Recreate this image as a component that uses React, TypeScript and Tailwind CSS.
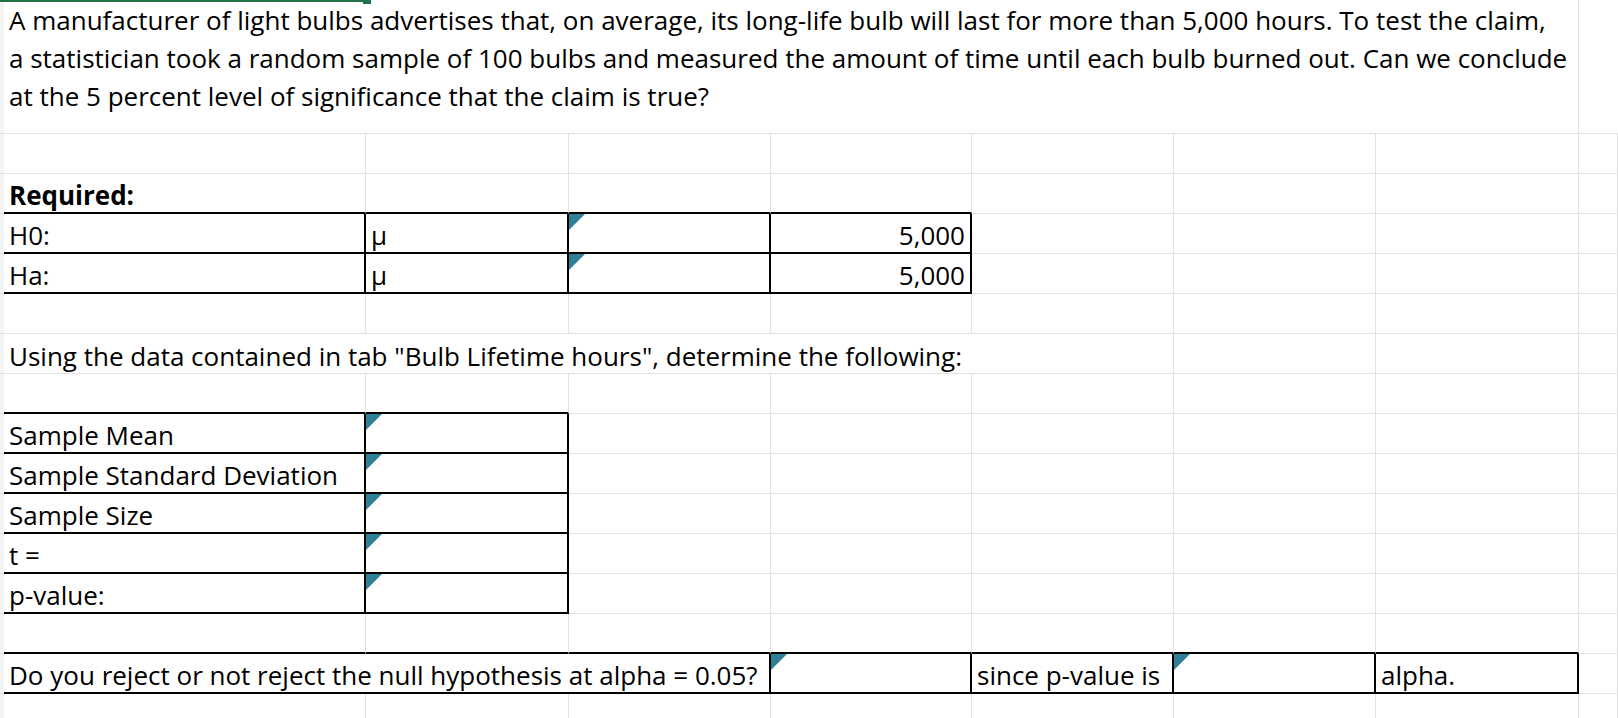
import React from "react";

type Cell = {
  w: string; // width class
  text?: string;
  bold?: boolean;
  alignRight?: boolean;
  bb?: boolean;
  br?: boolean;
  tri?: boolean;
};

const A = "w-[362px]";
const B = "w-[203px]";
const C = "w-[202px]";
const D = "w-[201px]";
const E = "w-[202px]";
const F = "w-[202px]";
const G = "w-[203px]";
const H = "flex-1";

const Tri = () => (
  <svg className="absolute left-0 top-0" width="16" height="16" viewBox="0 0 16 16">
    <polygon points="0,0 16,0 0,16" fill="#2f7f96" />
  </svg>
);

function CellView({ c }: { c: Cell }) {
  const cls = [
    "relative h-full flex items-end shrink-0 overflow-visible whitespace-nowrap pb-[4px] leading-[26px]",
    c.w,
    c.bb ? "border-b-2 border-b-black" : "border-b border-b-[#e1e1e1]",
    c.br ? "border-r-2 border-r-black" : "border-r border-r-[#e1e1e1]",
    c.alignRight ? "justify-end pr-[5px]" : "pl-[5px]",
    c.bold ? "font-bold" : "",
  ].join(" ");
  return (
    <div className={cls}>
      {c.tri ? <Tri /> : null}
      {c.text ? <span>{c.text}</span> : null}
    </div>
  );
}

function Row({ cells }: { cells: Cell[] }) {
  return (
    <div className="flex h-[40px]">
      <div className="w-[4px] h-full bg-[#f3f3f3] border-b border-b-[#e1e1e1] shrink-0" />
      {cells.map((c, i) => (
        <CellView key={i} c={c} />
      ))}
    </div>
  );
}

const empty = (bbCols: number = 0): Cell[] => {
  const ws = [A, B, C, D, E, F, G];
  const cells: Cell[] = ws.map((w, i) => ({ w, bb: i < bbCols }));
  cells.push({ w: H });
  return cells;
};

const sampleRow = (label: string): Cell[] => [
  { w: A, text: label, bb: true, br: true },
  { w: B, bb: true, br: true, tri: true },
  { w: C },
  { w: D },
  { w: E },
  { w: F },
  { w: G },
  { w: H },
];

const hypRow = (label: string): Cell[] => [
  { w: A, text: label, bb: true, br: true },
  { w: B, text: "μ", bb: true, br: true },
  { w: C, bb: true, br: true, tri: true },
  { w: D, text: "5,000", alignRight: true, bb: true, br: true },
  { w: E },
  { w: F },
  { w: G },
  { w: H },
];

export default function App() {
  return (
    <div
      className="relative w-[1618px] h-[718px] overflow-hidden bg-white text-black text-[26px]"
      style={{ fontFamily: "'Open Sans', Lato, sans-serif" }}
    >
      {/* selection indicator from cell above */}
      <div className="absolute left-0 top-0 w-[363px] h-[2px] bg-[#217346]" />
      <div className="absolute left-[363px] top-0 w-[8px] h-[4px] bg-[#217346]" />

      {/* top merged text cell */}
      <div className="flex h-[134px]">
        <div className="w-[4px] h-full bg-[#f3f3f3] border-b border-b-[#e1e1e1] shrink-0" />
        <div className="w-[1575px] h-full shrink-0 border-r border-b border-[#e1e1e1] pl-[5px] pt-[1px] leading-[38px] whitespace-nowrap">
          <div>
            A manufacturer of light bulbs advertises that, on average, its long-life bulb will last for more than 5,000 hours. To test the claim,
          </div>
          <div>
            a statistician took a random sample of 100 bulbs and measured the amount of time until each bulb burned out. Can we conclude
          </div>
          <div>at the 5 percent level of significance that the claim is true?</div>
        </div>
        <div className="flex-1 h-full border-b border-b-[#e1e1e1]" />
      </div>

      <Row cells={empty(0)} />
      <Row
        cells={[
          { w: A, text: "Required:", bold: true, bb: true },
          { w: B, bb: true },
          { w: C, bb: true },
          { w: D, bb: true },
          { w: E },
          { w: F },
          { w: G },
          { w: H },
        ]}
      />
      <Row cells={hypRow("H0:")} />
      <Row cells={hypRow("Ha:")} />
      <Row cells={empty(0)} />
      <Row
        cells={[
          {
            w: "w-[1170px]",
            text: 'Using the data contained in tab "Bulb Lifetime hours", determine the following:',
          },
          { w: F },
          { w: G },
          { w: H },
        ]}
      />
      <Row cells={empty(2)} />
      <Row cells={sampleRow("Sample Mean")} />
      <Row cells={sampleRow("Sample Standard Deviation")} />
      <Row cells={sampleRow("Sample Size")} />
      <Row cells={sampleRow("t =")} />
      <Row cells={sampleRow("p-value:")} />
      <Row cells={empty(7)} />
      <Row
        cells={[
          {
            w: "w-[767px]",
            text: "Do you reject or not reject the null hypothesis at alpha = 0.05?",
            bb: true,
            br: true,
          },
          { w: D, bb: true, br: true, tri: true },
          { w: E, text: "since p-value is", bb: true, br: true },
          { w: F, bb: true, br: true, tri: true },
          { w: G, text: "alpha.", bb: true, br: true },
          { w: H },
        ]}
      />
      <Row cells={empty(0)} />
    </div>
  );
}
